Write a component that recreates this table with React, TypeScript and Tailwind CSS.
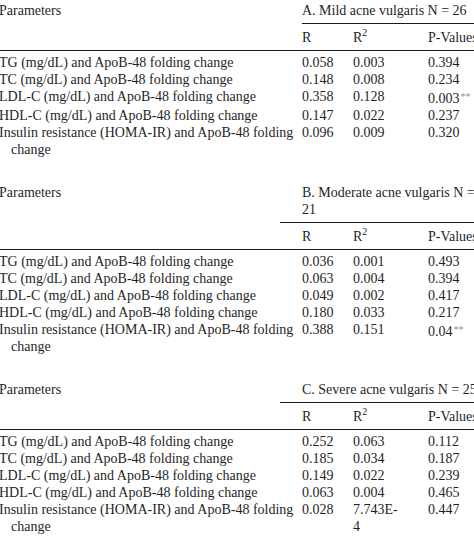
const groupA = {
  title: ["A. Mild acne vulgaris N = 26"],
  lineFromLabel: false,
  rows: [
    ["TG (mg/dL) and ApoB-48 folding change", "0.058", "0.003", "0.394"],
    ["TC (mg/dL) and ApoB-48 folding change", "0.148", "0.008", "0.234"],
    ["LDL-C (mg/dL) and ApoB-48 folding change", "0.358", "0.128", "0.003**"],
    ["HDL-C (mg/dL) and ApoB-48 folding change", "0.147", "0.022", "0.237"],
    ["Insulin resistance (HOMA-IR) and ApoB-48 folding|change", "0.096", "0.009", "0.320"],
  ],
};

const groupB = {
  title: ["B. Moderate acne vulgaris N =", "21"],
  lineFromLabel: true,
  rows: [
    ["TG (mg/dL) and ApoB-48 folding change", "0.036", "0.001", "0.493"],
    ["TC (mg/dL) and ApoB-48 folding change", "0.063", "0.004", "0.394"],
    ["LDL-C (mg/dL) and ApoB-48 folding change", "0.049", "0.002", "0.417"],
    ["HDL-C (mg/dL) and ApoB-48 folding change", "0.180", "0.033", "0.217"],
    ["Insulin resistance (HOMA-IR) and ApoB-48 folding|change", "0.388", "0.151", "0.04**"],
  ],
};

const groupC = {
  title: ["C. Severe acne vulgaris N = 25"],
  lineFromLabel: true,
  rows: [
    ["TG (mg/dL) and ApoB-48 folding change", "0.252", "0.063", "0.112"],
    ["TC (mg/dL) and ApoB-48 folding change", "0.185", "0.034", "0.187"],
    ["LDL-C (mg/dL) and ApoB-48 folding change", "0.149", "0.022", "0.239"],
    ["HDL-C (mg/dL) and ApoB-48 folding change", "0.063", "0.004", "0.465"],
    ["Insulin resistance (HOMA-IR) and ApoB-48 folding|change", "0.028", "7.743E-|4", "0.447"],
  ],
};

type Group = typeof groupA;

// "|" marks a forced line break, the second line is indented like a hanging cell
function Cell({ text, indent }: { text: string; indent?: boolean }) {
  const [first, second] = text.split("|");
  const stars = first.endsWith("**");
  return (
    <div className="whitespace-nowrap">
      <div>
        {stars ? first.slice(0, -2) : first}
        {stars && (
          <span className="ml-[1px] align-[3px] text-[10px] text-[#8f8f8f]">**</span>
        )}
      </div>
      {second && <div className={indent ? "pl-[12px]" : ""}>{second}</div>}
    </div>
  );
}

function SubTable({ group }: { group: Group }) {
  return (
    <div className="flex flex-col">
      <div className="grid grid-cols-[281px_1fr] pt-[2px]">
        <div>Parameters</div>
        <div className={group.lineFromLabel ? "" : "pl-[22px]"}>
          <div
            className={`border-b-[1.5px] border-[#1a1a1a] pb-[4px] ${
              group.lineFromLabel ? "pl-[22px]" : ""
            }`}
          >
            {group.title.map((t) => (
              <div key={t} className="whitespace-nowrap">
                {t}
              </div>
            ))}
          </div>
        </div>
      </div>
      <div className="grid grid-cols-[303px_51px_75px_1fr] border-b-[1.5px] border-[#1a1a1a] pt-[5px] pb-[4px]">
        <div />
        <div>R</div>
        <div>
          R<sup className="-top-[6px] text-[10px]">2</sup>
        </div>
        <div className="whitespace-nowrap">P-Values</div>
      </div>
      <div className="flex flex-col pt-[3px]">
        {group.rows.map((r) => (
          <div key={r[0]} className="grid grid-cols-[303px_51px_75px_1fr]">
            <Cell text={r[0]} indent />
            <Cell text={r[1]} />
            <Cell text={r[2]} />
            <Cell text={r[3]} />
          </div>
        ))}
      </div>
    </div>
  );
}

export default function App() {
  return (
    <div className="h-[536px] w-[474px] overflow-hidden bg-white">
      <div
        className="-ml-[1px] flex w-[520px] flex-col gap-[24px] text-[14px] leading-[17px] text-[#1f1f1f]"
        style={{ fontFamily: '"Liberation Serif", "DejaVu Serif", serif' }}
      >
        <SubTable group={groupA} />
        <SubTable group={groupB} />
        <SubTable group={groupC} />
      </div>
    </div>
  );
}
